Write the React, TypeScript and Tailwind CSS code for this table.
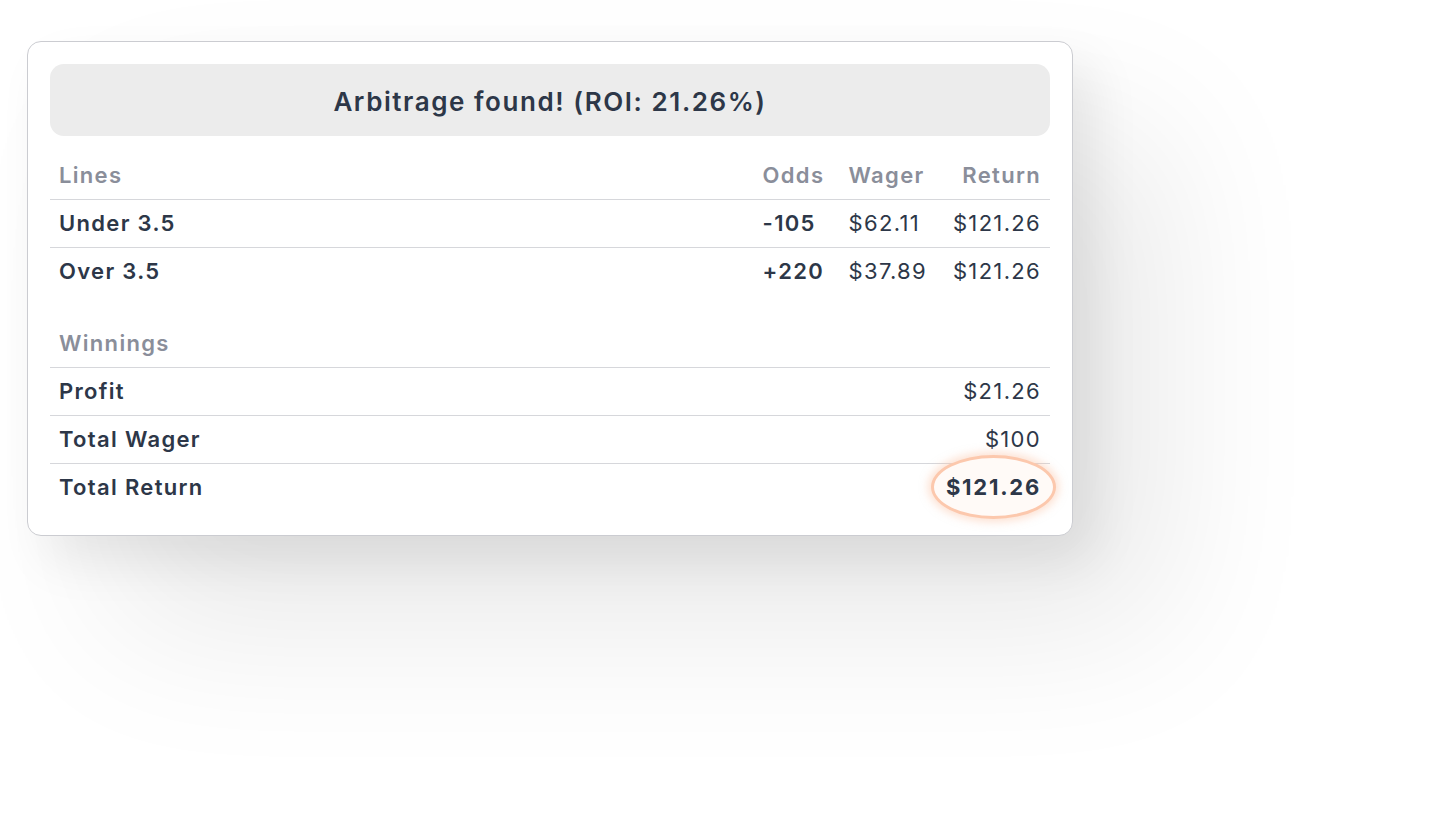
import React from 'react';

const lines = [
  { name: 'Under 3.5', odds: '-105', wager: '$62.11', ret: '$121.26' },
  { name: 'Over 3.5', odds: '+220', wager: '$37.89', ret: '$121.26' },
];

export default function App() {
  return (
    <div
      className="min-h-screen w-full bg-white pl-[27px] pt-[41px] text-[#2d3748]"
      style={{ fontFamily: 'Inter, "Noto Sans", sans-serif' }}
    >
      <div className="w-[1046px] rounded-[14px] border border-[#cbccd1] bg-white px-[22px] pt-[22px] pb-[24px] shadow-[20px_25px_50px_rgba(0,0,0,0.08),90px_90px_160px_rgba(0,0,0,0.09)]">
        <div className="flex h-[72px] items-center justify-center rounded-[14px] bg-[#ececec] pt-[3px] text-[26px] font-semibold tracking-[0.06em]">
          Arbitrage found! (ROI: 21.26%)
        </div>

        <table className="mt-4 w-full border-collapse text-[22px] tracking-[0.06em]">
          <thead>
            <tr className="h-[47px] border-b border-[#d6d7db] text-left text-[#8a8e9a]">
              <th className="px-[9px] font-semibold">Lines</th>
              <th className="w-[86px] px-[9px] font-semibold">Odds</th>
              <th className="w-[96px] px-[9px] font-semibold">Wager</th>
              <th className="w-[114px] px-[9px] text-right font-semibold">Return</th>
            </tr>
          </thead>
          <tbody>
            {lines.map((l, i) => (
              <tr key={l.name} className={`h-[48px] ${i === 0 ? 'border-b border-[#d6d7db]' : ''}`}>
                <td className="px-[9px] font-semibold">{l.name}</td>
                <td className="px-[9px] font-semibold">{l.odds}</td>
                <td className="px-[9px]">{l.wager}</td>
                <td className="px-[9px] text-right">{l.ret}</td>
              </tr>
            ))}
          </tbody>
        </table>

        <table className="mt-[25px] w-full border-collapse text-[22px] tracking-[0.06em]">
          <thead>
            <tr className="h-[47px] border-b border-[#d6d7db] text-left text-[#8a8e9a]">
              <th className="px-[9px] font-semibold">Winnings</th>
              <th className="px-[9px]"></th>
            </tr>
          </thead>
          <tbody>
            <tr className="h-[48px] border-b border-[#d6d7db]">
              <td className="px-[9px] font-semibold">Profit</td>
              <td className="px-[9px] text-right">$21.26</td>
            </tr>
            <tr className="h-[48px] border-b border-[#d6d7db]">
              <td className="px-[9px] font-semibold">Total Wager</td>
              <td className="px-[9px] text-right">$100</td>
            </tr>
            <tr className="h-[48px]">
              <td className="px-[9px] font-semibold">Total Return</td>
              <td className="px-[9px] text-right">
                <span className="relative inline-block font-bold tracking-[0.08em]">
                  <span className="absolute left-[-15px] right-[-15px] top-[-16px] bottom-[-15px] rounded-[50%] border-[3px] border-[#fcc8ad] bg-[#fffaf7] shadow-[0_0_9px_3px_rgba(252,195,165,0.5)]"></span>
                  <span className="relative">$121.26</span>
                </span>
              </td>
            </tr>
          </tbody>
        </table>
      </div>
    </div>
  );
}
